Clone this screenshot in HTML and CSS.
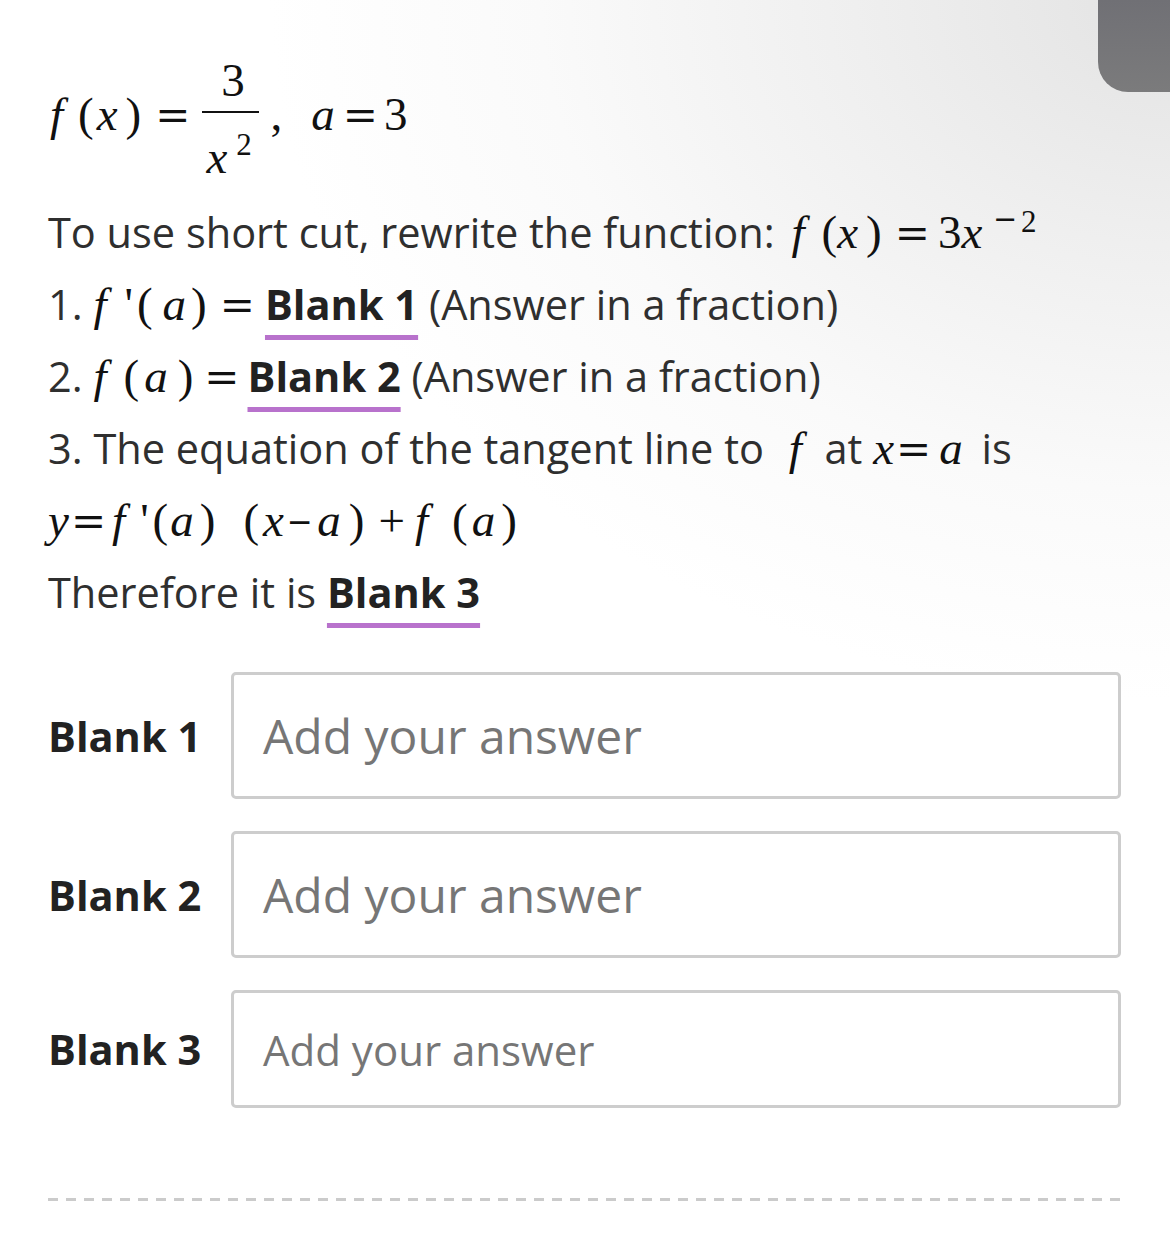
FILE: index.html
```html
<!DOCTYPE html>
<html>
<head>
<meta charset="utf-8">
<link rel="stylesheet" href="styles.css">
</head>
<body>
<div class="tab"></div>
<main class="page">
  <div class="formula"><span class="m ml-2">f</span><span class="m r ml-15">(</span><span class="m ml-3">x</span><span class="m r ml-8">)</span><span class="eq ml-14">=</span><span class="frac ml-12"><span class="num">3</span><span class="den"><span class="m">x</span><sup class="sq">2</sup></span></span><span class="m r ml-11">,</span><span class="m ml-29">a</span><span class="eq ml-8">=</span><span class="m r ml-6">3</span></div>
  <div class="lines">
    <p class="line">To use short cut, rewrite the function: <span class="m ml-6">f</span><span class="m r ml-17">(</span><span class="m">x</span><span class="m r ml-8">)</span><span class="eq ml-13">=</span><span class="m r ml-8">3</span><span class="m">x</span><span class="exp"><span class="minus sup-minus ml-12">−</span><span class="ml-5">2</span></span></p>
    <p class="line">1. <span class="m">f</span><span class="m r ml-18">'</span><span class="m r ml-4">(</span><span class="m ml-10">a</span><span class="m r ml-5">)</span><span class="eq ml-13">=</span><b class="blank ml-10">Blank 1</b> (Answer in a fraction)</p>
    <p class="line">2. <span class="m">f</span><span class="m r ml-17">(</span><span class="m ml-5">a</span><span class="m r ml-10">)</span><span class="eq ml-11">=</span><b class="blank ml-8">Blank 2</b> (Answer in a fraction)</p>
    <p class="line">3. The equation of the tangent line to <span class="m ml-14 mr-12">f</span> at <span class="m">x</span><span class="eq ml-2">=</span><span class="m ml-8 mr-8">a</span> is</p>
    <p class="line"><span class="m">y</span><span class="eq ml-2">=</span><span class="m ml-6">f</span><span class="m r ml-15">'</span><span class="m r ml-4">(</span><span class="m ml-2">a</span><span class="m r ml-6">)</span><span class="m r ml-28">(</span><span class="m ml-4">x</span><span class="minus line-minus ml-4">−</span><span class="m ml-6">a</span><span class="m r ml-8">)</span><span class="m r ml-14">+</span><span class="m ml-10">f</span><span class="m r ml-24">(</span><span class="m ml-4">a</span><span class="m r ml-6">)</span></p>
    <p class="line">Therefore it is <b class="blank">Blank 3</b></p>
  </div>
  <div class="answers">
    <div class="row">
      <label class="label">Blank 1</label>
      <div class="box tall"><span class="ph">Add your answer</span></div>
    </div>
    <div class="row">
      <label class="label">Blank 2</label>
      <div class="box tall"><span class="ph">Add your answer</span></div>
    </div>
    <div class="row">
      <label class="label">Blank 3</label>
      <div class="box short"><span class="ph small">Add your answer</span></div>
    </div>
  </div>
  <div class="divider"></div>
</main>
</body>
</html>
```

FILE: styles.css
```css
html, body {
  margin: 0;
  padding: 0;
}
body {
  width: 1170px;
  height: 1258px;
  overflow: hidden;
  position: relative;
  background: radial-gradient(ellipse 900px 700px at 100% 0%, #e3e3e3 0%, #efefef 35%, #fafafa 70%, #ffffff 100%);
  font-family: "Open Sans", "Liberation Sans", sans-serif;
  color: #2f2f2f;
}
.tab {
  position: absolute;
  top: 0;
  right: 0;
  width: 72px;
  height: 92px;
  background: linear-gradient(#707075, #7b7b7c);
  border-bottom-left-radius: 30px;
}
.page {
  padding: 60px 49px 0 48px;
}

/* math tokens */
.m {
  font-family: "Liberation Serif", "Times New Roman", serif;
  font-style: italic;
  font-size: 47px;
  color: #111;
}
.m.r {
  font-style: normal;
}
.eq {
  font-family: "DejaVu Serif", "Liberation Serif", serif;
  font-size: 42px;
  line-height: 1;
  color: #111;
}
.minus {
  font-family: "Liberation Sans", Arial, sans-serif;
  line-height: 1;
  color: #111;
}
.line-minus {
  font-size: 40px;
}
.sup-minus {
  font-size: 37px;
}
.ml-2 { margin-left: 2px; }
.ml-3 { margin-left: 3px; }
.ml-4 { margin-left: 4px; }
.ml-5 { margin-left: 5px; }
.ml-6 { margin-left: 6px; }
.ml-8 { margin-left: 8px; }
.ml-10 { margin-left: 10px; }
.ml-11 { margin-left: 11px; }
.ml-12 { margin-left: 12px; }
.ml-13 { margin-left: 13px; }
.ml-14 { margin-left: 14px; }
.ml-15 { margin-left: 15px; }
.ml-17 { margin-left: 17px; }
.ml-18 { margin-left: 18px; }
.ml-24 { margin-left: 24px; }
.ml-28 { margin-left: 28px; }
.ml-29 { margin-left: 29px; }
.mr-8 { margin-right: 8px; }
.mr-12 { margin-right: 12px; }

/* top formula */
.formula {
  font-size: 47px;
  line-height: 50px;
  white-space: nowrap;
}
.frac {
  display: inline-block;
  vertical-align: -43px;
  width: 57px;
}
.num {
  display: block;
  font-family: "Liberation Serif", serif;
  font-size: 47px;
  line-height: 40px;
  color: #111;
  text-align: center;
  padding: 0 0 11px 4px;
  border-bottom: 2px solid #111;
}
.den {
  display: block;
  line-height: 40px;
  padding: 22px 0 0 4px;
}
.sq {
  font-family: "Liberation Serif", serif;
  font-size: 31px;
  line-height: 0;
  color: #111;
  vertical-align: 18px;
  margin-left: 9px;
}

/* text lines */
.lines {
  margin-top: 19px;
}
.line {
  margin: 0;
  font-size: 41.5px;
  line-height: 72px;
  white-space: nowrap;
}
.exp {
  font-family: "Liberation Serif", serif;
  font-size: 31px;
  line-height: 1;
  vertical-align: 16px;
  color: #111;
}
.blank {
  font-weight: 700;
  color: #222;
  text-decoration: underline;
  text-decoration-color: #b872cc;
  text-decoration-thickness: 5px;
  text-underline-offset: 15px;
  text-decoration-skip-ink: none;
}

/* answers */
.answers {
  margin-top: 44px;
  display: flex;
  flex-direction: column;
  gap: 32px;
}
.row {
  display: flex;
  align-items: center;
  gap: 32px;
}
.label {
  width: 151px;
  font-weight: 700;
  font-size: 41.5px;
  color: #222;
  white-space: nowrap;
}
.box {
  flex: 1;
  box-sizing: border-box;
  border: 3px solid #cdcdcd;
  border-radius: 5px;
  background: #fff;
  display: flex;
  align-items: center;
  padding-left: 29px;
}
.box.tall { height: 127px; }
.box.short { height: 118px; }
.ph {
  font-size: 48px;
  color: #767676;
}
.ph.small {
  font-size: 42px;
}
.divider {
  margin-top: 90px;
  height: 3px;
  background: repeating-linear-gradient(90deg, #cbcbcb 0 10px, transparent 10px 18px);
}
```
